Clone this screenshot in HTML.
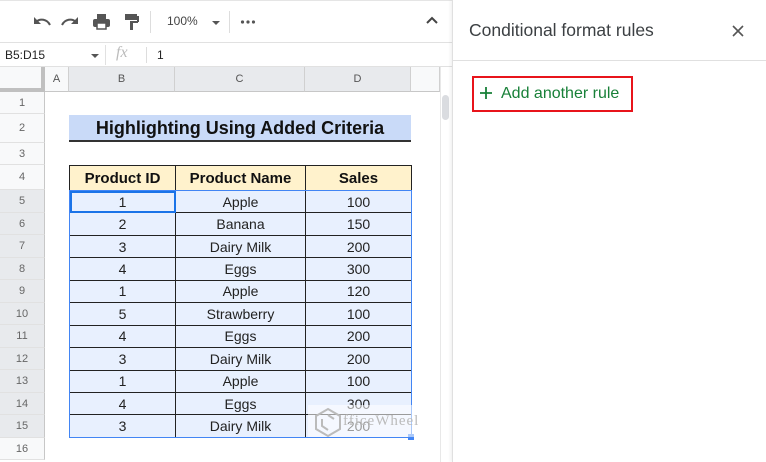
<!DOCTYPE html>
<html><head><style>
*{box-sizing:border-box;margin:0;padding:0}
body{width:766px;height:462px;overflow:hidden;background:#fff;font-family:"Liberation Sans",Arial,sans-serif;position:relative}
.a{position:absolute}
.rh{position:absolute;left:0;width:45px;background:#f8f9fa;border-bottom:1px solid #e1e1e1;border-right:1px solid #c7c7c7;font-size:11px;color:#666;text-align:center}
.sel{background:#e8eaed}
.ch{position:absolute;top:67px;height:25px;background:#f8f9fa;border-right:1px solid #d0d0d0;border-bottom:1px solid #c7c7c7;font-size:11px;color:#555;text-align:center;line-height:25px}
.ch.sel{background:#e8eaed}
table{position:absolute;left:69px;top:165px;border-collapse:collapse;font-size:14px}
td{border:1px solid #222;text-align:center;height:22.45px;padding:0;color:#222;background:#e8f0fe}
tr.h td{background:#fff2cc;font-weight:bold;font-size:15px;height:25px;color:#111}
</style></head><body>
<div class="a" style="left:0;top:0;width:452px;height:43px;background:#fff;border-top:1px solid #e5e5e5"></div>
<svg class="a" style="left:30px;top:10px" width="120" height="24" viewBox="0 0 120 24">
<path d="M20 15 C17 9 10 8 6 12" fill="none" stroke="#555" stroke-width="2"/><path d="M4 7 L4 14 L11 14 Z" fill="#555"/>
<path d="M32 15 C35 9 42 8 46 12" fill="none" stroke="#555" stroke-width="2"/><path d="M48 7 L48 14 L41 14 Z" fill="#555"/>
<rect x="63" y="9" width="17" height="8" rx="2" fill="#555"/><rect x="67" y="4" width="9" height="5" fill="#555"/><rect x="67" y="13" width="9" height="6" fill="#fff" stroke="#555" stroke-width="1.5"/>
<rect x="95" y="4" width="12" height="6" fill="#555"/><rect x="107" y="6" width="2" height="6" fill="#555"/><rect x="100" y="11" width="8" height="2" fill="#555"/><rect x="100" y="12" width="3" height="8" fill="#555"/>
</svg>
<div class="a" style="left:150px;top:11px;width:1px;height:22px;background:#ddd"></div>
<div class="a" style="left:167px;top:14px;font-size:12px;color:#444">100%</div>
<div class="a" style="left:212px;top:21px;border-left:4px solid transparent;border-right:4px solid transparent;border-top:4px solid #555"></div>
<div class="a" style="left:229px;top:11px;width:1px;height:22px;background:#ddd"></div>
<svg class="a" style="left:240px;top:19px" width="16" height="6"><circle cx="2.5" cy="3" r="1.6" fill="#555"/><circle cx="8" cy="3" r="1.6" fill="#555"/><circle cx="13.5" cy="3" r="1.6" fill="#555"/></svg>
<svg class="a" style="left:425px;top:15px" width="14" height="10"><path d="M2 8 L7 3 L12 8" fill="none" stroke="#444" stroke-width="2"/></svg>
<div class="a" style="left:0;top:42px;width:452px;height:25px;border-top:1px solid #e1e1e1;border-bottom:1px solid #e1e1e1"></div>
<div class="a" style="left:5px;top:48px;font-size:12px;color:#222">B5:D15</div>
<div class="a" style="left:91px;top:54px;border-left:4px solid transparent;border-right:4px solid transparent;border-top:4px solid #555"></div>
<div class="a" style="left:105px;top:45px;width:1px;height:20px;background:#e1e1e1"></div>
<div class="a" style="left:116px;top:44px;font-size:16px;color:#bbb;font-style:italic;font-family:'Liberation Serif',serif">fx</div>
<div class="a" style="left:146px;top:47px;width:1px;height:16px;background:#ddd"></div>
<div class="a" style="left:157px;top:48px;font-size:12px;color:#222">1</div>
<div class="a" style="left:0;top:67px;width:45px;height:25px;background:#f8f9fa;border-right:4px solid #c0c0c0;border-bottom:4px solid #c0c0c0"></div>
<div class="ch" style="left:45px;width:24px">A</div>
<div class="ch sel" style="left:69px;width:106px">B</div>
<div class="ch sel" style="left:175px;width:130px">C</div>
<div class="ch sel" style="left:305px;width:106px">D</div>
<div class="ch" style="left:411px;width:29px"></div>
<div class="rh" style="top:92px;height:22px;line-height:22px">1</div>
<div class="rh" style="top:114px;height:29px;line-height:29px">2</div>
<div class="rh" style="top:143px;height:22px;line-height:22px">3</div>
<div class="rh" style="top:165px;height:25px;line-height:25px">4</div>
<div class="rh sel" style="top:190px;height:22.5px;line-height:22px">5</div>
<div class="rh sel" style="top:212.5px;height:22.5px;line-height:22px">6</div>
<div class="rh sel" style="top:235px;height:22.5px;line-height:22px">7</div>
<div class="rh sel" style="top:257.5px;height:22.5px;line-height:22px">8</div>
<div class="rh sel" style="top:280px;height:22.5px;line-height:22px">9</div>
<div class="rh sel" style="top:302.5px;height:22.5px;line-height:22px">10</div>
<div class="rh sel" style="top:325px;height:22.5px;line-height:22px">11</div>
<div class="rh sel" style="top:347.5px;height:22.5px;line-height:22px">12</div>
<div class="rh sel" style="top:370px;height:22.5px;line-height:22px">13</div>
<div class="rh sel" style="top:392.5px;height:22.5px;line-height:22px">14</div>
<div class="rh sel" style="top:415px;height:22.5px;line-height:22px">15</div>
<div class="rh" style="top:437.5px;height:22px;line-height:22px">16</div>
<div class="a" style="left:69px;top:115px;width:342px;height:27px;background:#c9daf8;border-bottom:2px solid #333;font-weight:bold;font-size:18px;text-align:center;line-height:26px;color:#111">Highlighting Using Added Criteria</div>
<table>
<colgroup><col style="width:106px"><col style="width:130px"><col style="width:106px"></colgroup>
<tr class="h"><td>Product ID</td><td>Product Name</td><td>Sales</td></tr>
<tr><td style="outline:2px solid #1a73e8;outline-offset:-2px">1</td><td>Apple</td><td>100</td></tr>
<tr><td>2</td><td>Banana</td><td>150</td></tr>
<tr><td>3</td><td>Dairy Milk</td><td>200</td></tr>
<tr><td>4</td><td>Eggs</td><td>300</td></tr>
<tr><td>1</td><td>Apple</td><td>120</td></tr>
<tr><td>5</td><td>Strawberry</td><td>100</td></tr>
<tr><td>4</td><td>Eggs</td><td>200</td></tr>
<tr><td>3</td><td>Dairy Milk</td><td>200</td></tr>
<tr><td>1</td><td>Apple</td><td>100</td></tr>
<tr><td>4</td><td>Eggs</td><td>300</td></tr>
<tr><td>3</td><td>Dairy Milk</td><td>200</td></tr>
</table>
<div class="a" style="left:69px;top:190px;width:343px;height:248px;border:1px solid #4285f4"></div>
<div class="a" style="left:408px;top:434px;width:6px;height:6px;background:#4285f4"></div>
<div class="a" style="left:308px;top:405px;width:145px;height:32px;background:rgba(255,255,255,0.55)"></div>
<svg class="a" style="left:313px;top:407px" width="30" height="30"><path d="M15 2 L27 9 L27 22 L15 29 L3 22 L3 9 Z" fill="none" stroke="#bbb" stroke-width="2"/><path d="M15 8 L21 12 M9 12 L9 19 L15 23" fill="none" stroke="#bbb" stroke-width="2"/></svg>
<div class="a" style="left:343px;top:413px;font-size:15px;color:#bbb;letter-spacing:1px;font-family:'Liberation Serif',serif">fficeWheel</div>
<div class="a" style="left:440px;top:67px;width:12px;height:395px;background:#fff;border-left:1px solid #e8e8e8"></div>
<div class="a" style="left:442px;top:95px;width:7px;height:25px;background:#dadce0;border-radius:4px"></div>
<div class="a" style="left:452px;top:0;width:314px;height:462px;background:#fff;border-left:1px solid #e0e0e0;box-shadow:-2px 0 3px rgba(0,0,0,0.05)"></div>
<div class="a" style="left:469px;top:20px;font-size:17.5px;color:#3c4043">Conditional format rules</div>
<svg class="a" style="left:731px;top:24px" width="14" height="14"><path d="M2 2 L12 12 M12 2 L2 12" stroke="#555" stroke-width="1.6"/></svg>
<div class="a" style="left:453px;top:60px;width:313px;height:1px;background:#e0e0e0"></div>
<div class="a" style="left:472px;top:76px;width:161px;height:36px;border:2px solid #e8141b"></div>
<svg class="a" style="left:480px;top:87px" width="12" height="12"><path d="M6 0 V12 M0 6 H12" stroke="#188038" stroke-width="1.8"/></svg>
<div class="a" style="left:501px;top:85px;font-size:16px;color:#188038">Add another rule</div>
</body></html>
